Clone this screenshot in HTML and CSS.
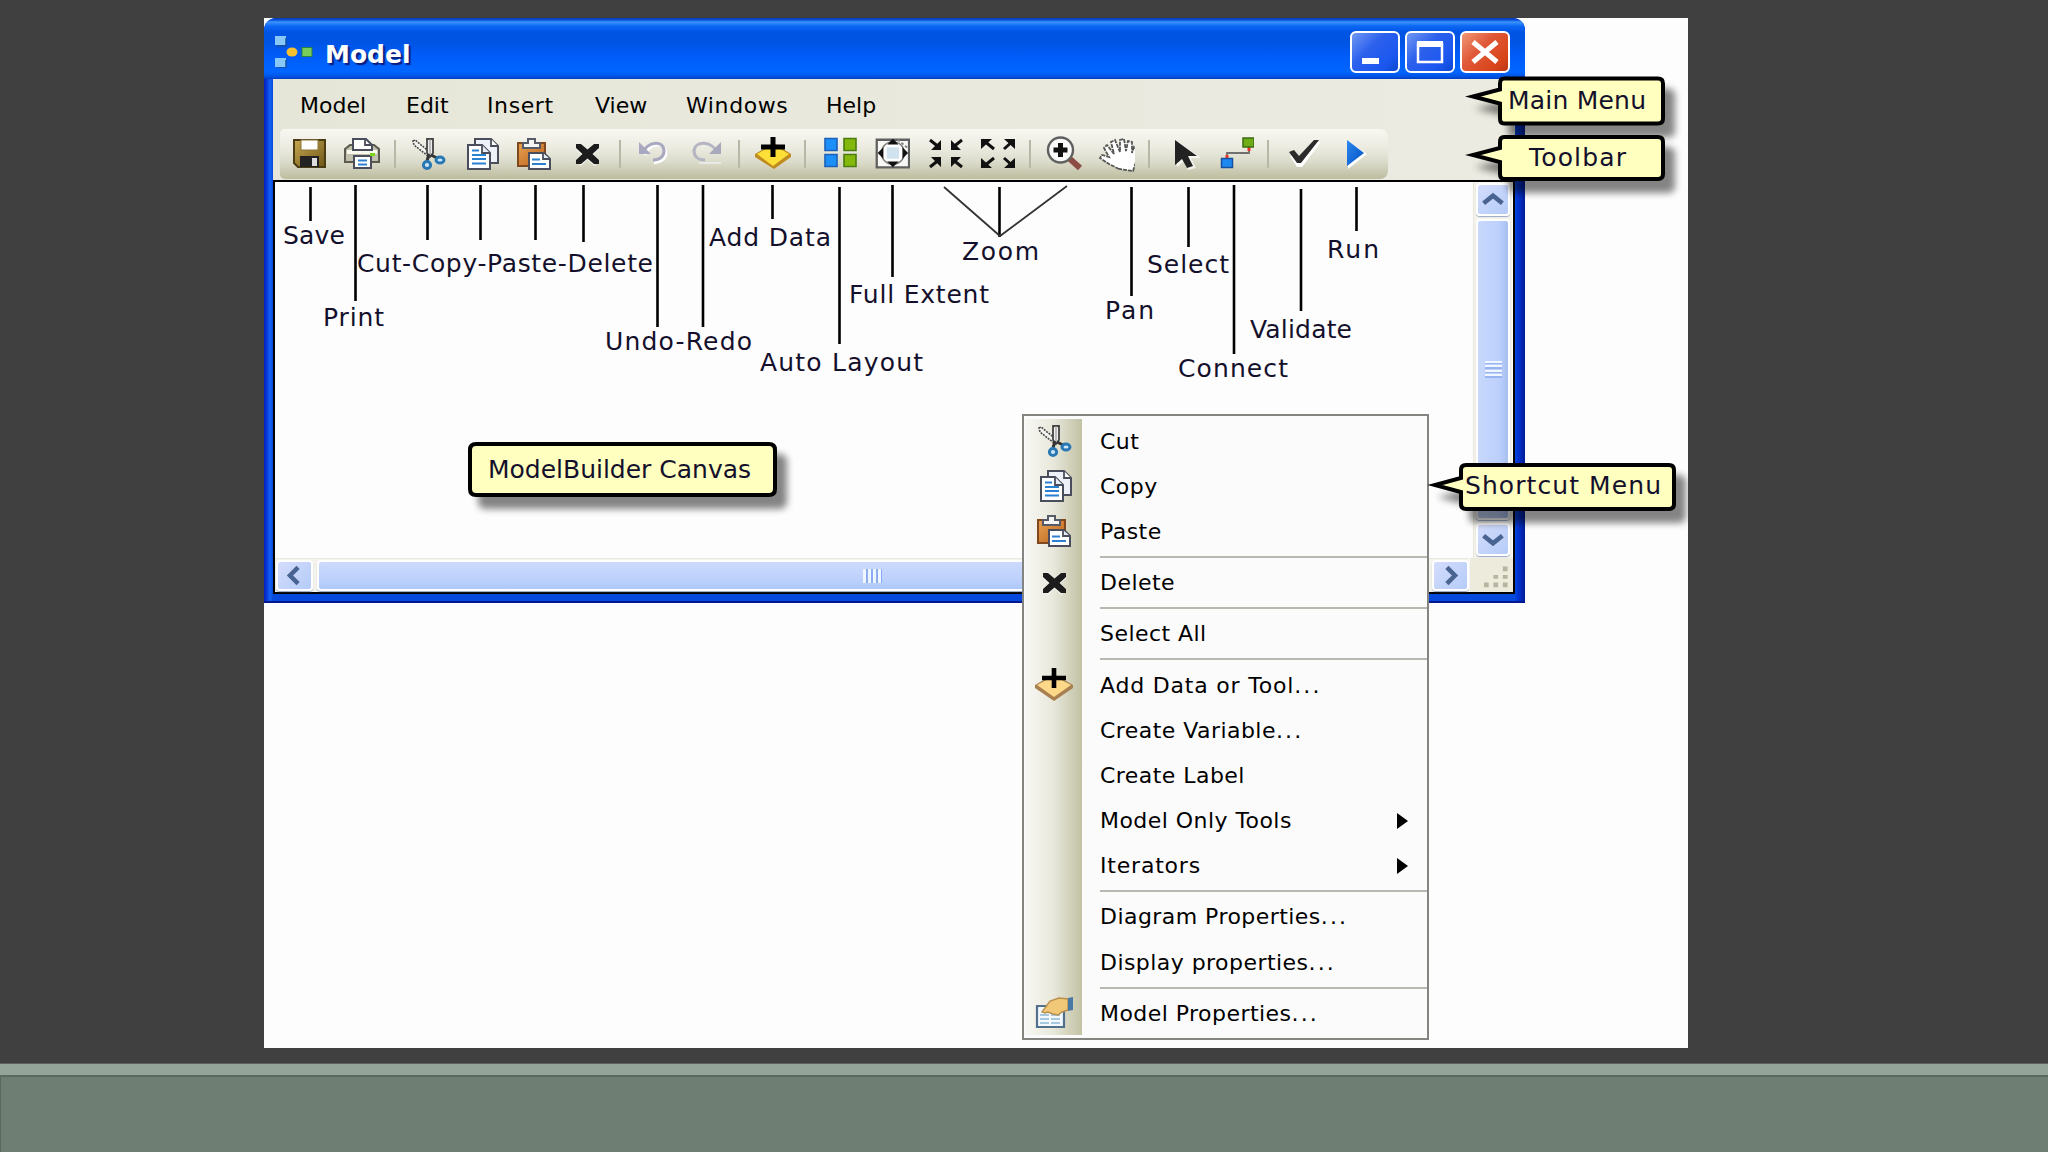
FILE: index.html
```
<!DOCTYPE html>
<html lang="en">
  <head>
    <meta charset="utf-8">
    <title>Model</title>
    <link rel="stylesheet" href="styles.css">
  </head>
  <body>
    <!-- shared icons, 38 x 36 -->
    <svg class="defs" width="0" height="0">
      <defs>
        <linearGradient id="wood" x1="0" x2="1" y2="1"><stop offset="0" stop-color="#e8a050"/><stop offset="1" stop-color="#b8641c"/></linearGradient>
        <linearGradient id="brass" x1="0" x2="1" y2="1"><stop offset="0" stop-color="#c8a850"/><stop offset="1" stop-color="#6e5618"/></linearGradient>
        <linearGradient id="blue" x1="0" x2="1" y2="1"><stop offset="0" stop-color="#2c88f0"/><stop offset="1" stop-color="#0050c0"/></linearGradient>
        <filter id="shadow" x="-20%" y="-40%" width="150%" height="220%">
          <feDropShadow dx="10" dy="12" stdDeviation="3.5" flood-color="#000" flood-opacity=".48"/>
        </filter>
        <symbol id="i-cut" viewBox="0 0 38 36">
          <path d="M4 5l2-1 16 13-3 3L5 9z" fill="#f4f4f0" stroke="#4a4a4a" stroke-width="1.6" stroke-dasharray="2 1"/>
          <path d="M18 3h6v14l-3 4-3-4z" fill="#eee" stroke="#444" stroke-width="1.8"/>
          <path d="M21 3v15" stroke="#999" stroke-width="1.2"/>
          <path d="M20 18l-2 7M22 19l6 3" stroke="#333" stroke-width="3"/>
          <circle cx="18" cy="29" r="3.6" fill="#cfe6f8" stroke="#2878b4" stroke-width="3"/>
          <ellipse cx="31" cy="24" rx="4" ry="3" fill="#cfe6f8" stroke="#2878b4" stroke-width="3"/>
        </symbol>
        <symbol id="i-copy" viewBox="-2 0 38 36">
          <path d="M11 3h16l7 7v17H11z" fill="#eef2f8" stroke="#4a4e5c" stroke-width="2"/>
          <path d="M27 3v7h7" fill="#fff" stroke="#4a4e5c" stroke-width="1.8"/>
          <path d="M4 9h14l8 8v16H4z" fill="#fff" stroke="#4a4e5c" stroke-width="2"/>
          <path d="M18 9v8h8" fill="#e8ecf4" stroke="#4a4e5c" stroke-width="1.8"/>
          <path d="M8 14.500h7M8 19h14M8 23h14M8 27.500h14" stroke="#2c80d0" stroke-width="1.900"/>
        </symbol>
        <symbol id="i-paste" viewBox="-1 0 38 36">
          <path d="M2 7h27v23H2z" fill="url(#wood)" stroke="#80481c" stroke-width="2"/>
          <path d="M12 7V3h7v4h5v5H7V7z" fill="#f4f4f4" stroke="#555a66" stroke-width="2"/>
          <path d="M13 17h15l6 6v10H13z" fill="#fff" stroke="#4a4e5c" stroke-width="2"/>
          <path d="M27 17v6h7" fill="#e8ecf4" stroke="#4a4e5c" stroke-width="1.800"/>
          <path d="M16 23.500h8M16 28h14" stroke="#2c80d0" stroke-width="2"/>
        </symbol>
        <symbol id="i-delete" viewBox="-1 0 38 36">
          <path d="M9 10l19 17M28 10L9 27" stroke="#fff" stroke-width="8" opacity=".6"/>
          <path d="M7 8h5l6.500 5.500L25 8h5v4l-6.500 6L30 24v4h-5l-6.500-5.500L12 28H7v-4l6.500-6L7 12z" fill="#1c1c1c"/>
        </symbol>
        <symbol id="i-props" viewBox="0 0 38 36">
          <path d="M2 11h27v21H2z" fill="#f2f8fc" stroke="#50708c" stroke-width="2.200"/>
          <path d="M5 20h9M16 20h9M5 24h9M16 24h9M5 28h9M16 28h9" stroke="#a8c8e0" stroke-width="1.800"/>
          <path d="M7 17l8-11 9-3 9 1v11l-6 2-4 3-5-1-5-2-3 1z" fill="#f0c878" stroke="#b8904c" stroke-width="1.400"/>
          <path d="M33 3l5-1v13l-5 1z" fill="#4878a4"/>
        </symbol>
      </defs>
    </svg>

    <main class="slide">
      <section class="sheet">
        <div class="window">
          <header class="titlebar">
            <svg class="app-icon" width="38" height="32" viewBox="0 0 38 32">
              <rect x="0" y="0" width="11" height="9" fill="#88c8f8"/><path d="M11 2v8H2" fill="none" stroke="#1850a0" stroke-width="1.500"/>
              <rect x="0" y="22" width="11" height="9" fill="#88c8f8"/><path d="M11 24v8H2" fill="none" stroke="#1850a0" stroke-width="1.500"/>
              <ellipse cx="17" cy="16" rx="5.500" ry="4.500" fill="#f8c030"/>
              <rect x="27" y="11.500" width="10" height="9" fill="#78cc58" stroke="#2c8040" stroke-width="1"/>
            </svg>
            <h1>Model</h1>
            <div class="win-buttons">
              <span class="win-btn"><svg viewBox="0 0 50 42"><path d="M12 30h17" stroke="#fff" stroke-width="6"/></svg></span>
              <span class="win-btn"><svg viewBox="0 0 50 42"><path d="M13 13h24v18H13z" fill="none" stroke="#fff" stroke-width="2.500"/><path d="M12 13h26" stroke="#fff" stroke-width="6"/></svg></span>
              <span class="win-btn close"><svg viewBox="0 0 50 42"><path d="M13 11l24 20M37 11L13 31" stroke="#fff" stroke-width="5"/></svg></span>
            </div>
          </header>

          <div class="client">
            <nav class="menubar">
              <span>Model</span><span>Edit</span><span class="wide">Insert</span><span>View</span><span class="wide">Windows</span><span>Help</span>
            </nav>

            <div class="toolbar">
              <div class="group">
                <svg viewBox="0 0 38 36">
                  <path d="M4 4h31v27H8l-4-4z" fill="url(#brass)" stroke="#4c3c14" stroke-width="2"/>
                  <rect x="11" y="4" width="17" height="10" fill="#fff" stroke="#8c7838"/>
                  <rect x="10" y="20" width="19" height="11" fill="#222"/><rect x="22" y="22" width="5" height="8" fill="#ddd"/>
                </svg>
                <svg viewBox="0 0 38 36">
                  <path d="M2 13l5-4h24l5 4v13H2z" fill="#c0c0ac" stroke="#5a5a50" stroke-width="2"/>
                  <path d="M4 16h30" stroke="#f8f8ee" stroke-width="4"/>
                  <path d="M10 14V3h13l6 6v5z" fill="#fff" stroke="#4a4e5c" stroke-width="2"/><path d="M22 3v6h7" fill="none" stroke="#4a4e5c" stroke-width="1.800"/>
                  <path d="M11 20h17v12H11z" fill="#fff" stroke="#4a4e5c" stroke-width="2"/>
                  <path d="M15 24.500h9M15 28.500h9" stroke="#2c80d0" stroke-width="1.800"/><rect x="27" y="17" width="5" height="3" fill="#78d818"/>
                </svg>
              </div>
              <i class="sep"></i>
              <div class="group">
                <svg><use href="#i-cut"/></svg>
                <svg><use href="#i-copy"/></svg>
                <svg><use href="#i-paste"/></svg>
                <svg><use href="#i-delete"/></svg>
              </div>
              <i class="sep"></i>
              <div class="group">
                <svg viewBox="-2 0 38 36"><path d="M7 17C12 5 27 3 28 15c0 6-5 9-12 10" fill="none" stroke="#fff" stroke-width="2.500" transform="translate(2 2)"/><path d="M7 16C12 5 28 4 28 15c0 5-4 9-11 9" fill="none" stroke="#a8a8c0" stroke-width="3"/><path d="M3 6v12h12z" fill="#a8a8c0"/></svg>
                <svg viewBox="0 0 38 36"><path d="M30 16C25 5 8 4 7 15c0 6 5 9 11 9" fill="none" stroke="#b4b4c4" stroke-width="3"/><path d="M34 6v12H22z" fill="#a8a8bc"/><path d="M12 27h22" stroke="#eee" stroke-width="1.500"/></svg>
              </div>
              <i class="sep"></i>
              <div class="group">
                <svg viewBox="-1 0 38 36"><path d="M1 18L20 7l17 11v3L20 33 1 21z" fill="#c08c20"/><path d="M3 18L19 9l16 9-16 12z" fill="#fce038"/><path d="M19 1v20M7 11h24" stroke="#000" stroke-width="5"/></svg>
              </div>
              <i class="sep"></i>
              <div class="group">
                <svg viewBox="-1 0 38 36">
                  <path d="M5 2.500h12v12H5zM5 18.500h12v12H5z" fill="#1c90f8" stroke="#1c60b8" stroke-width="1.600"/>
                  <path d="M24 2.500h12v12H24zM24 18.500h12v12H24z" fill="#84b80c" stroke="#4c7c10" stroke-width="1.600"/>
                </svg>
                <svg viewBox="0 0 40 36">
                  <path d="M5 3h34v29H5z" fill="#f8f8f4" stroke="#606060" stroke-width="2.400"/>
                  <path d="M27 3l11 9" stroke="#888" stroke-width="2" stroke-dasharray="3 2"/>
                  <circle cx="22" cy="17" r="12" fill="#fff" stroke="#777" stroke-width="1.500"/>
                  <rect x="15.500" y="11" width="13" height="12" fill="#cfe2ee"/>
                  <path d="M22 2l6 6H16zM22 32l6-6H16zM6 17l6-6v12zM38 17l-6-6v12z" fill="#111"/>
                </svg>
                <svg viewBox="-2 0 38 36">
                  <path d="M3 4l10 8M35 4l-10 8M3 31l10-8M35 31l-10-8" stroke="#111" stroke-width="3"/>
                  <path d="M14 4v10H4zM24 4v10h10zM14 31V21H4zM24 31V21h10z" fill="#111"/>
                </svg>
                <svg viewBox="-1 0 38 36">
                  <path d="M4 4l11 9M35 4l-10 9M4 31l11-9M35 31l-10-9" stroke="#111" stroke-width="3"/>
                  <path d="M2 13V3h11zM36 13V3H25zM2 22v10h11zM36 22v10H25z" fill="#111"/>
                </svg>
              </div>
              <i class="sep"></i>
              <div class="group">
                <svg viewBox="0 0 38 36">
                  <path d="M26 23l10 9" stroke="#8c4c44" stroke-width="6"/>
                  <circle cx="16.500" cy="14" r="12.500" fill="#fafafa" stroke="#606060" stroke-width="2.400"/>
                  <path d="M16.500 7v14M9.500 14h14" stroke="#111" stroke-width="5"/>
                </svg>
                <svg viewBox="0 0 38 36">
                  <path d="M22 33L12 28 3 22l2-3 7 2-5-9 3-3 7 9-3-12 4-2 5 12V4l4-1 2 12 2-10 4 1v11l2-6 2 2v13l-3 9z" fill="#fff" stroke="#555" stroke-width="1.800" stroke-dasharray="4 1"/>
                </svg>
              </div>
              <i class="sep"></i>
              <div class="group">
                <svg viewBox="0 0 38 36"><path d="M12 4v26l7-6 4 9 8-2-5-10h10z" fill="#fff" opacity=".7" transform="translate(2 1)"/><path d="M12 4v25l7-6 5 9 6-2-5-10h9z" fill="#222"/></svg>
                <svg viewBox="0 0 38 36">
                  <path d="M11 23v-6h22v-6" fill="none" stroke="#707070" stroke-width="1.800"/>
                  <path d="M11 19v5M33 10v5" stroke="#f03020" stroke-width="3"/>
                  <rect x="27" y="2" width="11" height="9" fill="#70ac18" stroke="#3c6c10" stroke-width="1.500"/>
                  <rect x="5.500" y="22.500" width="11" height="9" fill="#1c88f0" stroke="#1850a0" stroke-width="1.500"/>
                </svg>
              </div>
              <i class="sep"></i>
              <div class="group">
                <svg viewBox="0 0 38 36"><path d="M7 18l5-3 5 6L33 4h5L19 29h-5z" fill="#fff" transform="translate(1 2)"/><path d="M7 16l5-2 5 6L32 4h5L19 27h-4z" fill="#2c2c2c"/></svg>
                <svg viewBox="0 0 38 36"><path d="M12 4v28l19-15z" fill="#fff" transform="translate(1 1)"/><path d="M12 4v26l17-13z" fill="url(#blue)"/></svg>
              </div>
            </div>

            <div class="view">
              <div class="canvas"></div>
              <div class="vscroll">
                <span class="arrow"><svg viewBox="0 0 32 30"><path d="M6 19l10-8 10 8" fill="none" stroke="#4a6492" stroke-width="5"/></svg></span>
                <span class="thumb"><i class="grip"></i></span>
                <span class="arrow"><svg viewBox="0 0 32 30"><path d="M6 11l10 8 10-8" fill="none" stroke="#4a6492" stroke-width="5"/></svg></span>
              </div>
              <div class="hscroll">
                <span class="arrow"><svg viewBox="0 0 32 30"><path d="M20 6l-9 9 9 9" fill="none" stroke="#4a6492" stroke-width="5"/></svg></span>
                <span class="thumb"><i class="grip"></i></span>
                <span class="arrow"><svg viewBox="0 0 32 30"><path d="M12 6l9 9-9 9" fill="none" stroke="#4a6492" stroke-width="5"/></svg></span>
              </div>
              <svg class="resize" viewBox="0 0 42 36"><path d="M13 26h5v5h-5zM23 26h5v5h-5zM33 26h5v5h-5zM23 18h5v4h-5zM33 18h5v4h-5zM33 9h5v5h-5z" fill="#b8b4a0"/></svg>
            </div>
          </div>
        </div>

        <div class="context-menu">
          <div class="item"><svg><use href="#i-cut"/></svg><span>Cut</span></div>
          <div class="item"><svg><use href="#i-copy"/></svg><span>Copy</span></div>
          <div class="item"><svg><use href="#i-paste"/></svg><span>Paste</span></div>
          <hr>
          <div class="item"><svg><use href="#i-delete"/></svg><span>Delete</span></div>
          <hr>
          <div class="item"><span>Select All</span></div>
          <hr>
          <div class="item"><svg viewBox="0 0 38 36"><path d="M0 18L19 7l19 11v3L19 34 0 21z" fill="#a88050"/><path d="M2 18L19 9l17 9-17 12z" fill="#fcd888"/><path d="M19 1v20M7 11h24" stroke="#000" stroke-width="4.600"/></svg><span class="loose">Add Data or Tool<b>...</b></span></div>
          <div class="item"><span>Create Variable<b>...</b></span></div>
          <div class="item"><span>Create Label</span></div>
          <div class="item more"><span>Model Only Tools</span></div>
          <div class="item more"><span class="loose">Iterators</span></div>
          <hr>
          <div class="item"><span>Diagram Properties<b>...</b></span></div>
          <div class="item"><span>Display properties<b>...</b></span></div>
          <hr>
          <div class="item"><svg><use href="#i-props"/></svg><span>Model Properties<b>...</b></span></div>
        </div>

        <!-- pointer lines, labels and callouts -->
        <svg class="notes" width="1424" height="1030" viewBox="264 18 1424 1030">
          <g class="lines">
            <path d="M310.500 187v34M355.500 185v116M427.500 185v55M480.500 185v55M535.500 185v55M583.500 185v57M657.500 185v142M703 185v142M772.500 185v34M839.500 187v157M892.500 185v92M999.500 187v50M1131.500 187v109M1188.500 187v60M1234 185v169M1301 189v122M1356.500 187v44"/>
            <path class="thin" d="M944 187l56 49 67-50"/>
          </g>
          <g class="labels">
            <text x="283" y="243.500" textLength="62">Save</text>
            <text x="323" y="325.500" textLength="61">Print</text>
            <text x="357" y="272" textLength="296">Cut-Copy-Paste-Delete</text>
            <text x="605" y="350" textLength="147">Undo-Redo</text>
            <text x="709" y="246" textLength="122">Add Data</text>
            <text x="760" y="371" textLength="163">Auto Layout</text>
            <text x="849" y="303" textLength="140">Full Extent</text>
            <text x="962" y="260" textLength="77">Zoom</text>
            <text x="1105" y="319" textLength="49">Pan</text>
            <text x="1147" y="272.500" textLength="82">Select</text>
            <text x="1178" y="377" textLength="110">Connect</text>
            <text x="1250" y="338" textLength="102">Validate</text>
            <text x="1327" y="258" textLength="52">Run</text>
          </g>
          <g class="callouts">
            <path d="M1504 78.500h154q5 0 5 5v35q0 5-5 5h-154q-4 0-4-5v-15l-27-7 27-7v-6q0-5 4-5z"/>
            <path d="M1504 137h154q5 0 5 5v32q0 5-5 5h-154q-4 0-4-5v-12l-27-7 27-7v-6q0-5 4-5z"/>
            <path d="M1466 465h203q5 0 5 5v34q0 5-5 5h-203q-5 0-5-5v-12l-26-7 26-7v-8q0-5 5-5z"/>
            <path d="M476 444h293q6 0 6 6v39q0 6-6 6H476q-6 0-6-6v-39q0-6 6-6z"/>
          </g>
          <g class="labels">
            <text x="1508" y="108.500" textLength="138">Main Menu</text>
            <text x="1529" y="165.500" textLength="97">Toolbar</text>
            <text x="1465" y="494" textLength="196">Shortcut Menu</text>
            <text x="488" y="477.500" textLength="263">ModelBuilder Canvas</text>
          </g>
        </svg>
      </section>
      <footer class="band"></footer>
    </main>
  </body>
</html>
```
FILE: styles.css
```
* {
  box-sizing: border-box;
}

body {
  margin: 0;
  background-color: #404040;
  font-family: "DejaVu Sans", Verdana, sans-serif;
  font-size: 22px;
  color: #000;
}

.defs {
  position: absolute;
}

.slide {
  width: 2048px;
  height: 1152px;
  display: flex;
  flex-direction: column;
  justify-content: space-between;
  overflow: hidden;
}

.sheet {
  position: relative;
  width: 1424px;
  height: 1030px;
  margin: 18px 0 0 264px;
  background-color: #fdfdfd;
}

.band {
  height: 88px;
  border-top: 11px solid #94a498;
  background-color: #6e7e72;
  box-shadow: 0 -1px 0 #5c625e, inset 1px 2px 0 #5a6a5e;
}

/* window */
.window {
  width: 1261px;
  height: 585px;
  display: flex;
  flex-direction: column;
  border-radius: 12px 12px 0 0;
  background: linear-gradient(90deg, #0420b8 0, #0838dc 3px, #1464f0 6px, #0448dc 9px, #0448dc 1251px, #0038d8 1253px, #001c98 1261px);
  border-bottom: 2px solid #001890;
}

.titlebar {
  height: 61px;
  display: flex;
  align-items: center;
  padding: 7px 15px 0 11px;
  border-radius: 12px 12px 0 0;
  background: linear-gradient(#0838a8 0, #0a50e0 2px, #3c94fc 4px, #0c68f4 8px, #0054e4 14px, #0054e4 24px, #005cf8 38px, #0066ff 54px, #0050e0 59px, #003cc0 61px);
}

.titlebar h1 {
  flex: 1;
  margin: 5px 0 0 12px;
  color: #fff;
  font-size: 25px;
  line-height: 30px;
  text-shadow: 2px 2px 1px #0a1c80;
}

.win-buttons {
  display: flex;
  gap: 5px;
}

.win-btn {
  width: 50px;
  height: 42px;
  border: 2px solid #fff;
  border-radius: 6px;
  background: linear-gradient(135deg, #7098f4 0, #2c60ec 40%, #1c58f0 75%, #0c48d0 100%);
}

.win-btn svg {
  display: block;
  width: 50px;
  height: 42px;
  margin: -2px;
}

.win-btn.close {
  background: linear-gradient(135deg, #f09878 0, #e05838 40%, #d84418 80%, #b83818 100%);
}

.client {
  width: 1242px;
  height: 515px;
  margin-left: 9px;
  display: flex;
  flex-direction: column;
  background: linear-gradient(90deg, #e6e6d8, #ecebe2);
}

.menubar {
  height: 50px;
  display: grid;
  grid-template-columns: 106px 81px 108px 91px 140px auto;
  align-items: center;
  padding: 2px 0 0 27px;
}

.menubar .wide {
  letter-spacing: .6px;
}

.toolbar {
  width: 1108px;
  height: 50px;
  margin-left: 7px;
  padding-left: 10px;
  display: flex;
  align-items: center;
  gap: 13px;
  border-radius: 5px 8px 8px 5px;
  background: linear-gradient(#f8f8f2 0, #ecece2 35%, #dcdccc 65%, #bcbc9e 100%);
}

.group {
  display: flex;
  gap: 15px;
}

.group svg {
  width: 38px;
  height: 36px;
}

.sep {
  width: 2px;
  height: 28px;
  background-color: #b8b8a6;
}

.view {
  flex: 1;
  display: grid;
  grid-template: 1fr 34px / 1159px 1fr;
  margin-top: 1px;
  border: 2px solid #000;
  background-color: #fdfdfd;
}

.view .hscroll {
  width: 1194px;
}

.vscroll {
  width: 39px;
  margin-left: 39px;
  display: flex;
  flex-direction: column;
  align-items: center;
  gap: 3px;
  padding: 1px 3px 2px;
  border-left: 1px solid #e8e6d8;
  background-color: #f4f3ec;
}

.hscroll {
  grid-row: 2;
  grid-column: 1;
  display: flex;
  align-items: center;
  gap: 4px;
  padding: 1px 0 1px 1px;
  border-top: 1px solid #ece9e4;
  background-color: #f4f3ec;
}

.arrow,
.thumb {
  border: 2px solid #fff;
  border-radius: 4px;
  box-shadow: 0 1px 1px #98a8c8;
}

.arrow {
  flex: none;
  width: 34px;
  height: 33px;
  background: linear-gradient(135deg, #d4dcfc, #b4ccf8);
}

.hscroll .arrow,
.hscroll .thumb {
  height: 31px;
}

.hscroll .arrow {
  width: 37px;
}

.arrow svg {
  display: block;
  width: 100%;
  height: 100%;
}

.thumb {
  flex: 1;
  display: flex;
  align-items: center;
  justify-content: center;
}

.vscroll .thumb {
  width: 34px;
  background: linear-gradient(90deg, #c8d8fc, #bcd0fc 70%, #a8c0f0);
}

.hscroll .thumb {
  background: linear-gradient(#ccdafc, #bcd0fc 70%, #acc8f8);
}

.vscroll .grip {
  width: 17px;
  height: 17px;
  background: repeating-linear-gradient(#f0f6ff 0, #f0f6ff 2px, #98b4f0 2px, #98b4f0 3.500px, #c0d0fc 3.500px, #c0d0fc 4.400px);
}

.hscroll .grip {
  width: 19px;
  height: 14px;
  background: repeating-linear-gradient(90deg, #f0f6ff 0, #f0f6ff 3px, #8cacf0 3px, #8cacf0 5px);
}

.resize {
  grid-row: 2;
  grid-column: 2;
  width: 43px;
  height: 34px;
  margin-left: 36px;
  background-color: #ecebdc;
}

/* context menu */
.context-menu {
  position: absolute;
  left: 758px;
  top: 396px;
  width: 407px;
  height: 626px;
  padding: 2.500px 0 0 1px;
  border: 2px solid #848480;
  background: linear-gradient(90deg, #f8f8f4 0, #e8e8dc 28px, #c2c2a4 57px) 1px 3px / 57px 616px no-repeat, #fcfbfb;
}

.item {
  display: flex;
  align-items: center;
  height: 45.200px;
  padding-left: 10px;
  letter-spacing: .45px;
}

.item svg {
  width: 38px;
  height: 36px;
}

.item span {
  margin-left: 27px;
}

.item span:first-child {
  margin-left: 65px;
}

.item .loose {
  letter-spacing: .8px;
}

.item b {
  font-weight: normal;
  letter-spacing: 2.200px;
}

.more::after {
  content: "";
  margin: 0 19px 0 auto;
  border-left: 11px solid #000;
  border-top: 8px solid transparent;
  border-bottom: 8px solid transparent;
}

.context-menu hr {
  height: 6px;
  margin: 0 0 0 75px;
  border: 0;
  background: linear-gradient(#b8b8b0, #b8b8b0) 0 2px / 100% 2px no-repeat;
}

/* labels over the window */
.notes {
  position: absolute;
  left: 0;
  top: 0;
}

.lines path {
  fill: none;
  stroke: #000;
  stroke-width: 2.600;
}

.lines .thin {
  stroke: #333;
  stroke-width: 1.800;
}

.labels text {
  font-size: 25px;
  fill: #14102c;
}

.callouts path {
  fill: #ffffc0;
  stroke: #000;
  stroke-width: 4;
  filter: url(#shadow);
}
```
